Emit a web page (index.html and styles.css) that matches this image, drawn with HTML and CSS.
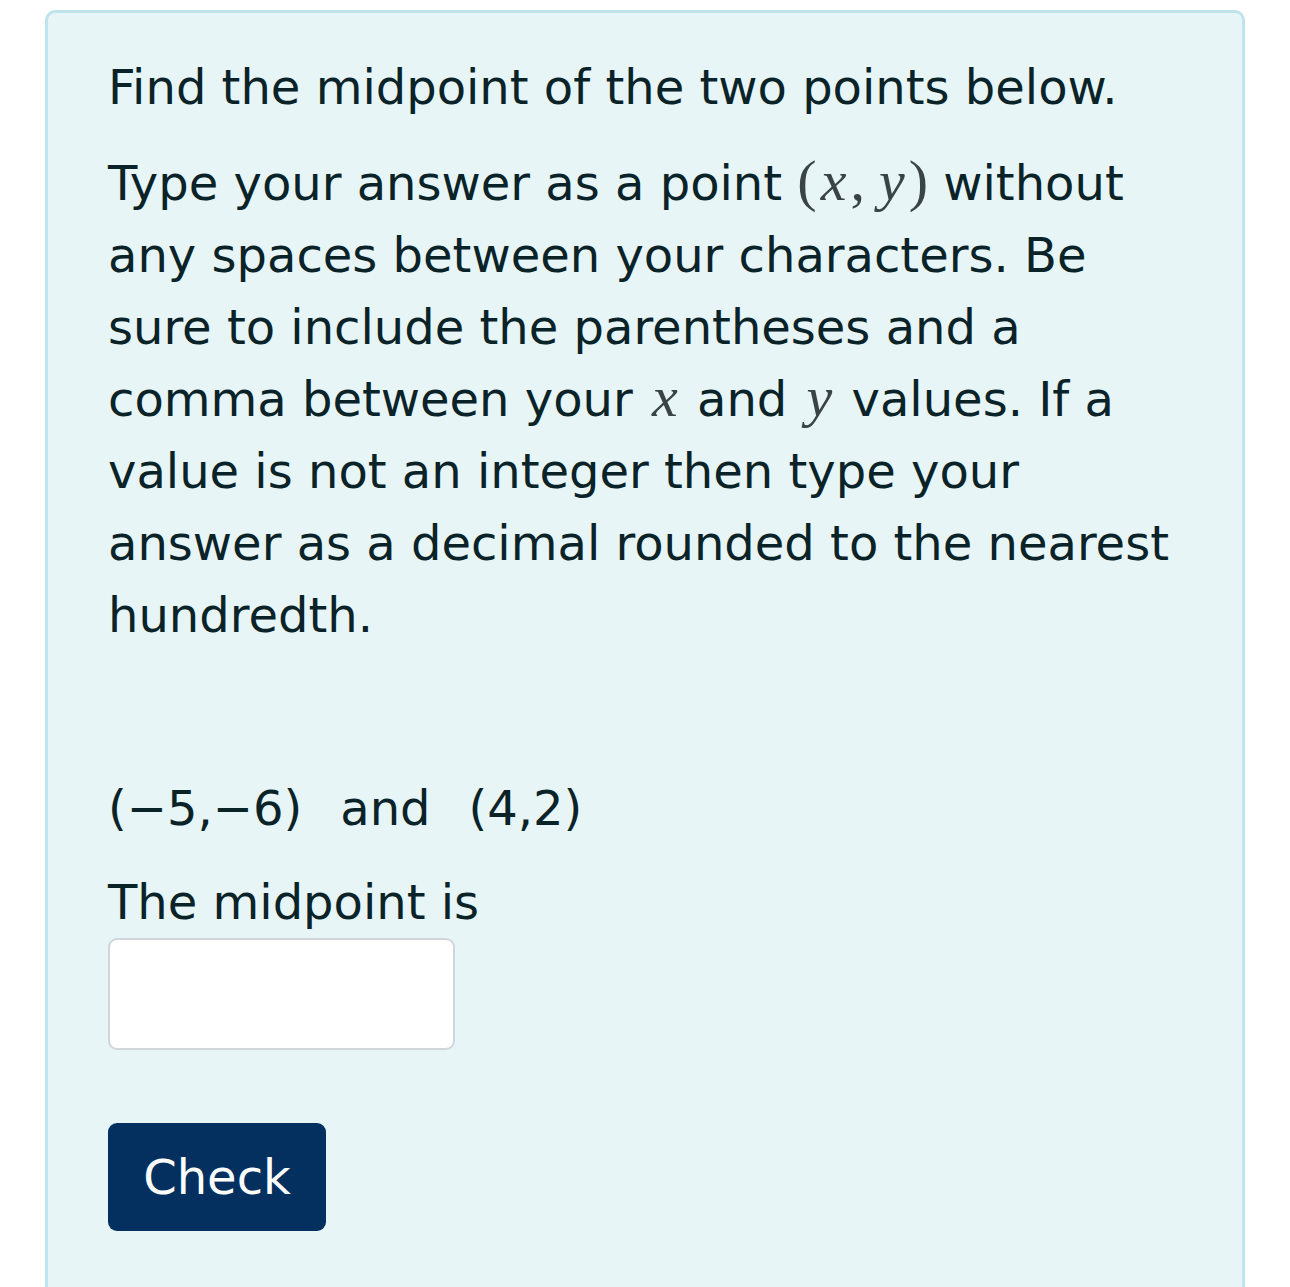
FILE: index.html
```html
<!DOCTYPE html>
<html>
<head>
<meta charset="utf-8">
<link rel="stylesheet" href="styles.css">
</head>
<body>
<div class="card">
  <p class="para">Find the midpoint of the two points below.</p>
  <p class="para">Type your answer as a point <span class="math"><span class="paren">(</span><i class="var">x</i><span class="comma">,</span><i class="var">y</i><span class="paren">)</span></span> without any spaces between your characters. Be sure to include the parentheses and a comma between your <span class="math"><i class="var">x</i></span> and <span class="math"><i class="var">y</i></span> values. If a value is not an integer then type your answer as a decimal rounded to the nearest hundredth.</p>
  <p class="points"><span>(−5,−6)</span><span>and</span><span>(4,2)</span></p>
  <p class="label">The midpoint is</p>
  <div class="answer"></div>
  <button class="check">Check</button>
</div>
</body>
</html>
```

FILE: styles.css
```css
html, body {
  margin: 0;
  padding: 0;
  background: #ffffff;
}
body {
  font-family: "DejaVu Sans", Verdana, sans-serif;
  color: #0a2329;
  font-size: 48px;
  line-height: 72px;
}
.card {
  margin: 10px 45px 0 45px;
  width: 1074px;
  min-height: 1300px;
  background: #e7f5f7;
  border: 3px solid #bfe4ec;
  border-radius: 10px;
  padding: 38px 60px 0 60px;
}
.para {
  margin: 0 0 24px 0;
}
.math {
  font-family: "Liberation Serif", "DejaVu Serif", serif;
  color: #3a4446;
  font-size: 58px;
  line-height: 1;
}
.var {
  font-style: italic;
  padding: 0 4px;
}
.comma {
  margin-right: 10px;
}
.paren {
  font-weight: normal;
}
.points {
  margin: 121px 0 0 0;
  display: flex;
  gap: 38px;
}
.label {
  margin: 22px 0 0 0;
}
.answer {
  width: 343px;
  height: 108px;
  background: #ffffff;
  border: 2px solid #d1d6dc;
  border-radius: 9px;
}
.check {
  display: block;
  margin-top: 73px;
  width: 218px;
  height: 108px;
  background: #03305f;
  color: #ffffff;
  border: none;
  border-radius: 9px;
  font-family: "DejaVu Sans", Verdana, sans-serif;
  font-size: 48px;
  padding: 0;
}
```
